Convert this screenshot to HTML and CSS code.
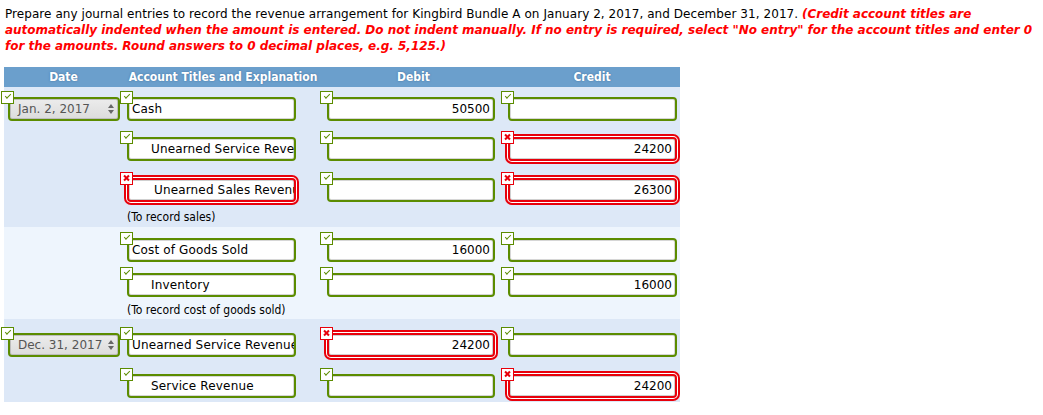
FILE: index.html
```html
<!DOCTYPE html>
<html lang="en">
    <head>
        <meta charset="UTF-8" />
        <title>Journal Entries</title>
        <link rel="stylesheet" href="styles.css">
    </head>
    <body>
        <p class="prompt">Prepare any journal entries to record the revenue arrangement for Kingbird Bundle A on January 2, 2017, and December 31, 2017. <em class="note">(Credit account titles are<br>automatically indented when the amount is entered. Do not indent manually. If no entry is required, select "No entry" for the account titles and enter 0<br>for the amounts. Round answers to 0 decimal places, e.g. 5,125.)</em></p>

        <div class="journal">
            <div class="head">
                <div>Date</div>
                <div>Account Titles and Explanation</div>
                <div>Debit</div>
                <div>Credit</div>
            </div>

            <div class="entry first">
                <div class="line">
                    <div class="cell"><span class="mark ok"></span><div class="fld date">Jan. 2, 2017<span class="spin"></span></div></div>
                    <div class="cell"><span class="mark ok"></span><div class="fld acct">Cash</div></div>
                    <div class="cell"><span class="mark ok"></span><div class="fld num">50500</div></div>
                    <div class="cell"><span class="mark ok"></span><div class="fld num"></div></div>
                </div>
                <div class="line tall">
                    <div class="cell"></div>
                    <div class="cell"><span class="mark ok"></span><div class="fld acct ind">Unearned Service Reve</div></div>
                    <div class="cell"><span class="mark ok"></span><div class="fld num"></div></div>
                    <div class="cell"><span class="mark bad"></span><div class="fld num bad">24200</div></div>
                </div>
                <div class="line taller">
                    <div class="cell"></div>
                    <div class="cell"><span class="mark bad"></span><div class="fld acct ind bad">Unearned Sales Revenu</div></div>
                    <div class="cell"><span class="mark ok"></span><div class="fld num"></div></div>
                    <div class="cell"><span class="mark bad"></span><div class="fld num bad">26300</div></div>
                </div>
                <div class="expl">(To record sales)</div>
            </div>

            <div class="entry second">
                <div class="line">
                    <div class="cell"></div>
                    <div class="cell"><span class="mark ok"></span><div class="fld acct">Cost of Goods Sold</div></div>
                    <div class="cell"><span class="mark ok"></span><div class="fld num">16000</div></div>
                    <div class="cell"><span class="mark ok"></span><div class="fld num"></div></div>
                </div>
                <div class="line short">
                    <div class="cell"></div>
                    <div class="cell"><span class="mark ok"></span><div class="fld acct ind">Inventory</div></div>
                    <div class="cell"><span class="mark ok"></span><div class="fld num"></div></div>
                    <div class="cell"><span class="mark ok"></span><div class="fld num">16000</div></div>
                </div>
                <div class="expl">(To record cost of goods sold)</div>
            </div>

            <div class="entry third">
                <div class="line">
                    <div class="cell"><span class="mark ok"></span><div class="fld date">Dec. 31, 2017<span class="spin"></span></div></div>
                    <div class="cell"><span class="mark ok"></span><div class="fld acct">Unearned Service Revenue</div></div>
                    <div class="cell"><span class="mark bad"></span><div class="fld num bad">24200</div></div>
                    <div class="cell"><span class="mark ok"></span><div class="fld num"></div></div>
                </div>
                <div class="line taller">
                    <div class="cell"></div>
                    <div class="cell"><span class="mark ok"></span><div class="fld acct ind">Service Revenue</div></div>
                    <div class="cell"><span class="mark ok"></span><div class="fld num"></div></div>
                    <div class="cell"><span class="mark bad"></span><div class="fld num bad">24200</div></div>
                </div>
            </div>
        </div>
    </body>
</html>
```

FILE: styles.css
```css
* {
    margin: 0;
    padding: 0;
    box-sizing: border-box;
}

body {
    font-family: Verdana, "DejaVu Sans", sans-serif;
    font-size: 12px;
    color: #000;
    background: #fff;
}

.prompt {
    padding: 6px 0 0 5px;
    line-height: 16px;
    white-space: nowrap;
    letter-spacing: 0.06px;
}

.note {
    color: #f00;
    font-weight: bold;
    font-style: italic;
    letter-spacing: -0.02px;
}

.journal {
    width: 676px;
    margin: 13px 0 0 4px;
}

.head,
.line {
    display: grid;
    grid-template-columns: 119px 200px 181px 176px;
}

.head {
    height: 20px;
    line-height: 20px;
    background: #6b9fcc;
    color: #fff;
    font-family: "DejaVu Sans Condensed", "DejaVu Sans", sans-serif;
    font-weight: bold;
    font-size: 12px;
    text-align: center;
    text-shadow: 0 0 2px #3f6f9c;
}

.entry {
    background: #dde8f7;
}

.entry.second {
    background: #eef5fd;
    padding: 11px 0 1px;
}

.entry.first {
    padding: 10px 0 2px;
}

.entry.third {
    padding: 14px 0 4px;
}

.line {
    height: 24px;
}

.line.short {
    margin-top: 11px;
}

.line.tall {
    margin-top: 16px;
}

.line.taller {
    margin-top: 17px;
}

.cell {
    position: relative;
    padding-left: 4px;
}

.fld {
    height: 24px;
    border: 2px solid #5b8c00;
    border-radius: 4px;
    background: #fff;
    box-shadow: inset 0 0 0 1px #d6d6d6;
    line-height: 20px;
    padding: 0 3px;
    white-space: nowrap;
    overflow: hidden;
}

.fld.date {
    position: relative;
    width: 112px;
    padding-left: 8px;
    color: #555;
    background: linear-gradient(#ececec, #dcdcdc);
    box-shadow: inset 0 0 0 1px #bdbdbd;
}

.spin {
    position: absolute;
    right: 4px;
    top: 5px;
    width: 6px;
    height: 10px;
}

.spin::before,
.spin::after {
    content: "";
    position: absolute;
    left: 0;
    border-left: 3px solid transparent;
    border-right: 3px solid transparent;
}

.spin::before {
    top: 0;
    border-bottom: 4px solid #666;
}

.spin::after {
    bottom: 0;
    border-top: 4px solid #666;
}

.fld.acct {
    width: 169px;
    letter-spacing: 0.15px;
}

.fld.ind {
    padding-left: 22px;
}

.fld.ind.bad {
    padding-left: 25px;
}

.fld.num {
    width: 168px;
    text-align: right;
}

.cell:last-child .fld.num {
    width: 169px;
}

.fld.bad {
    border-color: #e8000b;
    box-shadow: inset 0 0 0 1px #cfcfcf, 0 0 0 1px #fff, 0 0 0 3px #e8000b;
}

.mark {
    position: absolute;
    z-index: 2;
    left: -3px;
    top: -6px;
    width: 13px;
    height: 13px;
    background: #fff;
    border: 1px solid #5b8c00;
}

.mark.ok::after {
    content: "";
    position: absolute;
    left: 3px;
    top: 2px;
    width: 5px;
    height: 2px;
    border-left: 1.5px solid #5b8c00;
    border-bottom: 1.5px solid #5b8c00;
    transform: rotate(-45deg);
}

.mark.bad {
    border-color: #e8000b;
}

.mark.bad::before,
.mark.bad::after {
    content: "";
    position: absolute;
    left: 2px;
    top: 4px;
    width: 7px;
    height: 2px;
    background: #e8000b;
    transform: rotate(45deg);
}

.mark.bad::after {
    transform: rotate(-45deg);
}

.expl {
    padding-left: 123px;
    margin-top: 5px;
    line-height: 16px;
    font-family: Tahoma, "DejaVu Sans Condensed", sans-serif;
}

.entry.first .expl {
    margin-top: 7px;
}
```
